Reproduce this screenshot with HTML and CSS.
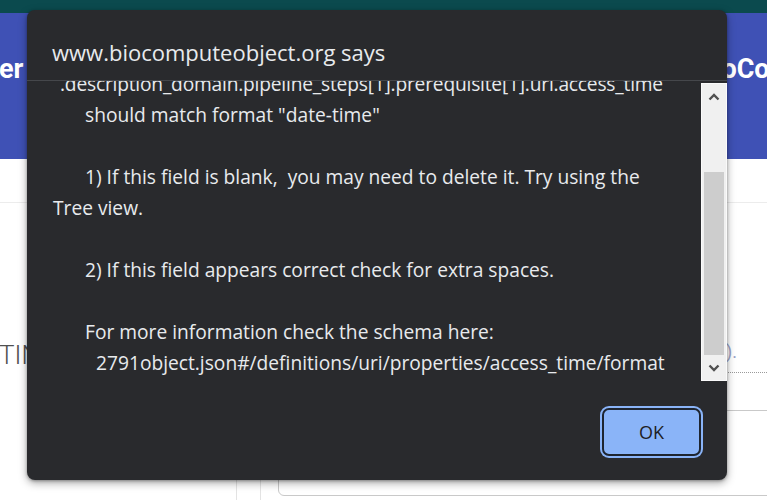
FILE: index.html
```html
<!DOCTYPE html>
<html lang="en">
<head>
<meta charset="utf-8">
<title>BioCompute</title>
<link rel="stylesheet" href="styles.css">
</head>
<body>
<div class="page">
  <div class="topbar"></div>
  <header class="appbar">
    <span class="brand-left">er</span>
    <span class="brand-right">oCompute</span>
  </header>
  <div class="tabs"></div>
  <section class="content">
    <div class="field-row">
      <span class="label">TIN</span>
      <span class="field">).</span>
    </div>
    <div class="lower">
      <div class="col-line"></div>
      <div class="col-line"></div>
      <div class="card"></div>
    </div>
  </section>
</div>

<div class="dialog" role="alertdialog">
  <div class="dialog-title">www.biocomputeobject.org says</div>
  <div class="dialog-body">
    <div class="viewport">
      <div class="msg">
        <div class="ln l-first">.description_domain.pipeline_steps[1].prerequisite[1].uri.access_time</div>
        <div class="ln l-indent">should match format "date-time"</div>
        <div class="ln"></div>
        <div class="ln l-indent">1) If this field is blank,&nbsp; you may need to delete it. Try using the</div>
        <div class="ln l-wrap">Tree view.</div>
        <div class="ln"></div>
        <div class="ln l-indent">2) If this field appears correct check for extra spaces.</div>
        <div class="ln"></div>
        <div class="ln l-indent">For more information check the schema here:</div>
        <div class="ln l-deep">2791object.json#/definitions/uri/properties/access_time/format</div>
      </div>
    </div>
    <div class="scrollbar">
      <div class="sb-btn">
        <svg width="12" height="8" viewBox="0 0 12 8"><path d="M1.5 6.5 L6 2 L10.5 6.5" fill="none" stroke="#505050" stroke-width="2.4"/></svg>
      </div>
      <div class="sb-track"><div class="sb-thumb"></div></div>
      <div class="sb-btn">
        <svg width="12" height="8" viewBox="0 0 12 8"><path d="M1.5 1.5 L6 6 L10.5 1.5" fill="none" stroke="#505050" stroke-width="2.4"/></svg>
      </div>
    </div>
  </div>
  <div class="dialog-foot">
    <button class="ok" type="button">OK</button>
  </div>
</div>
</body>
</html>
```

FILE: styles.css
```css
* { box-sizing: border-box; }
html, body { margin: 0; padding: 0; }
body {
  width: 767px;
  height: 500px;
  overflow: hidden;
  position: relative;
  background: #ffffff;
  font-family: Roboto, "Liberation Sans", sans-serif;
}
.page { width: 767px; height: 500px; overflow: hidden; }
.topbar { height: 13px; background: #0b4a4e; }
.appbar {
  height: 146px;
  background: #3f51b5;
  display: flex;
  justify-content: space-between;
  align-items: flex-start;
  padding-top: 40px;
  color: #fff;
  font-weight: 700;
  font-size: 27px;
  overflow: hidden;
}
.brand-left { margin-left: -1px; }
.brand-right { margin-right: -80px; }
.tabs { height: 44px; border-bottom: 1px solid #ececec; }
.content { padding-top: 134px; }
.field-row { display: flex; height: 36px; align-items: center; }
.label {
  width: 300px;
  font-size: 26px;
  color: #505050;
  margin-left: -1px;
  font-weight: 300;
}
.field {
  flex: 1;
  height: 36px;
  border-bottom: 1px dotted #9a9a9a;
  text-align: right;
  padding-right: 30px;
  color: #9aa3c8;
  font-size: 18px;
  line-height: 30px;
}
.lower { display: flex; margin-top: 37px; height: 100px; }
.col-line { width: 24px; border-left: 1px solid #e3e3e3; }
.col-line:first-child { margin-left: 236px; }
.card {
  margin-left: -6px;
  flex: 1;
  height: 86px;
  border: 1px solid #c9c9c9;
  border-radius: 6px;
  margin-right: -10px;
}

.dialog {
  position: absolute;
  left: 27px;
  top: 10px;
  width: 700px;
  height: 470px;
  background: #292a2d;
  border-radius: 8px;
  box-shadow: 0 3px 8px rgba(0,0,0,0.35), 0 1px 3px rgba(0,0,0,0.3);
  color: #e8eaed;
  font-family: "Open Sans", "Noto Sans", sans-serif;
  display: flex;
  flex-direction: column;
  overflow: hidden;
}
.dialog-title {
  height: 71px;
  padding: 28px 0 0 25px;
  font-size: 22px;
  line-height: 28px;
  border-bottom: 1px solid #45474b;
}
.dialog-body {
  display: flex;
  height: 301px;
}
.viewport { flex: 1; overflow: hidden; }
.msg { margin-top: -13px; font-size: 19.2px; }
.ln { height: 31px; line-height: 31px; white-space: nowrap; }
.l-first { padding-left: 33px; letter-spacing: -0.2px; }
.l-indent { padding-left: 58px; }
.l-wrap { padding-left: 26px; }
.l-deep { padding-left: 69px; }

.scrollbar {
  width: 26px;
  margin-top: 2px;
  height: 298px;
  background: #f0f0f0;
  border: 1px solid #fafafa;
  display: flex;
  flex-direction: column;
}
.sb-btn { height: 26px; display: flex; align-items: center; justify-content: center; }
.sb-track { flex: 1; display: flex; flex-direction: column; padding-top: 63px; }
.sb-thumb { height: 183px; background: #cdcdcd; margin: 0 2px; }

.dialog-foot {
  flex: 1;
  display: flex;
  justify-content: flex-end;
  align-items: flex-start;
  padding: 26px 26px 0 0;
}
.ok {
  width: 99px;
  height: 48px;
  border-radius: 7px;
  background: #8ab4f8;
  border: 2px solid #1e2530;
  box-shadow: 0 0 0 2px #8ab4f8;
  color: #202124;
  font-family: "Open Sans", "Noto Sans", sans-serif;
  font-size: 18px;
  padding: 0;
}
```
